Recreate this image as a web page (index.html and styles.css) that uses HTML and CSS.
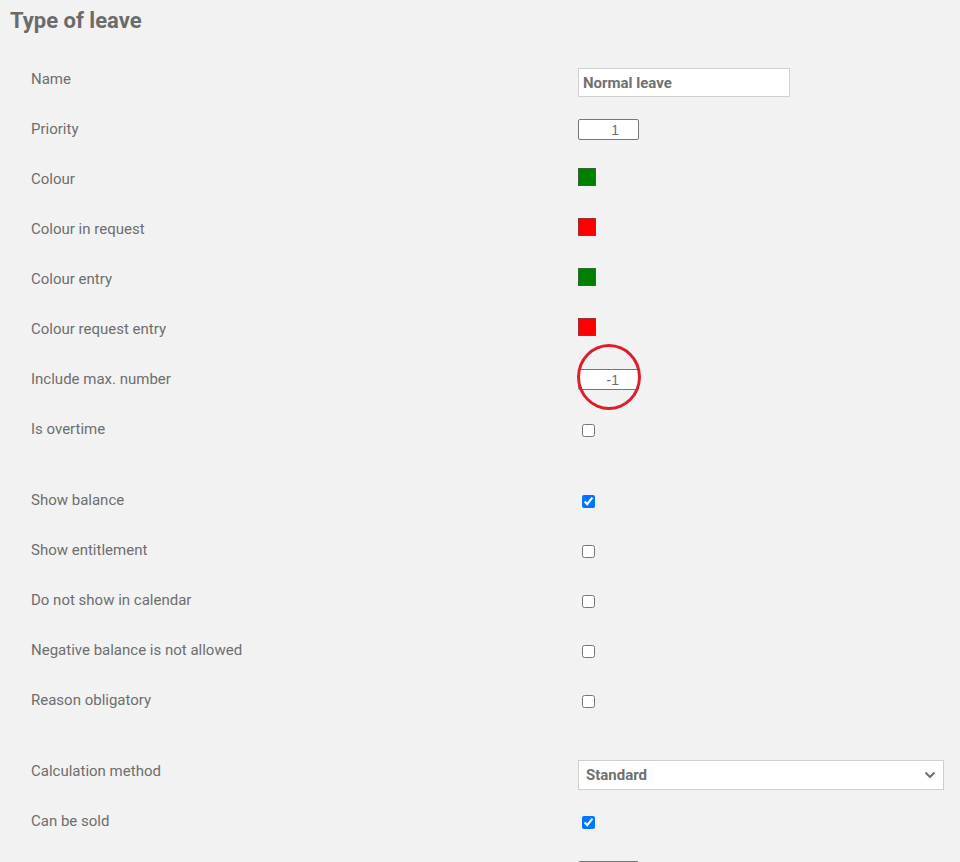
FILE: index.html
```html
<!DOCTYPE html>
<html lang="en">
<head>
<meta charset="utf-8">
<title>Type of leave</title>
<link rel="stylesheet" href="styles.css">
</head>
<body>
<h1 class="page-title">Type of leave</h1>
<div class="form">
  <div class="row"><div class="label">Name</div><div class="control"><input class="text-input" type="text" value="Normal leave"></div></div>
  <div class="row"><div class="label">Priority</div><div class="control"><input class="num-input" type="text" value="1"></div></div>
  <div class="row"><div class="label">Colour</div><div class="control"><span class="swatch green"></span></div></div>
  <div class="row"><div class="label">Colour in request</div><div class="control"><span class="swatch red"></span></div></div>
  <div class="row"><div class="label">Colour entry</div><div class="control"><span class="swatch green"></span></div></div>
  <div class="row"><div class="label">Colour request entry</div><div class="control"><span class="swatch red"></span></div></div>
  <div class="row"><div class="label">Include max. number</div><div class="control"><span class="highlight-wrap"><input class="num-input num-plain" type="text" value="-1"><span class="highlight-ring"></span></span></div></div>
  <div class="row"><div class="label">Is overtime</div><div class="control"><input class="check" type="checkbox"></div></div>
  <div class="spacer"></div>
  <div class="row"><div class="label">Show balance</div><div class="control"><input class="check" type="checkbox" checked></div></div>
  <div class="row"><div class="label">Show entitlement</div><div class="control"><input class="check" type="checkbox"></div></div>
  <div class="row"><div class="label">Do not show in calendar</div><div class="control"><input class="check" type="checkbox"></div></div>
  <div class="row"><div class="label">Negative balance is not allowed</div><div class="control"><input class="check" type="checkbox"></div></div>
  <div class="row"><div class="label">Reason obligatory</div><div class="control"><input class="check" type="checkbox"></div></div>
  <div class="spacer"></div>
  <div class="row"><div class="label">Calculation method</div><div class="control"><span class="select-wrap"><select class="select"><option>Standard</option></select><svg class="chevron" width="12" height="8" viewBox="0 0 12 8"><path d="M1.5 1.5 L6 6 L10.5 1.5" fill="none" stroke="#6f6f6f" stroke-width="2"/></svg></span></div></div>
  <div class="row"><div class="label">Can be sold</div><div class="control"><input class="check" type="checkbox" checked></div></div>
  <div class="row"><div class="label"></div><div class="control"><input class="num-input" type="text" value=""></div></div>
</div>
</body>
</html>
```

FILE: styles.css
```css
html, body {
  margin: 0;
  padding: 0;
  background: #f2f2f2;
  font-family: Roboto, "Liberation Sans", sans-serif;
  color: #6e6e6e;
  overflow: hidden;
}

.page-title {
  margin: 0;
  padding: 7px 0 0 10px;
  height: 54px;
  box-sizing: border-box;
  font-size: 22px;
  font-weight: 700;
  color: #6b6b6b;
  line-height: 28px;
}

.form {
  padding-left: 31px;
}

.row {
  display: grid;
  grid-template-columns: 547px 1fr;
  height: 50px;
  align-items: center;
}

.spacer {
  height: 21px;
}

.label {
  font-size: 15px;
  color: #6e6e6e;
}

.control {
  display: flex;
  align-items: center;
}

.text-input {
  width: 212px;
  height: 29px;
  box-sizing: border-box;
  margin: 7px 0 0 0;
  padding: 0 4px;
  border: 1px solid #cfcfcf;
  background: #fff;
  font-family: inherit;
  font-size: 15px;
  font-weight: 700;
  color: #707070;
  outline: none;
}

.num-input {
  width: 61px;
  height: 21px;
  box-sizing: border-box;
  margin: 1px 0 0 0;
  padding: 0 19px 0 2px;
  border: 1px solid #767676;
  border-radius: 2px;
  background: #fff;
  font-family: "Liberation Sans", Arial, sans-serif;
  font-size: 14px;
  color: #6e6e6e;
  text-align: right;
  outline: none;
}

.highlight-wrap {
  position: relative;
  display: inline-flex;
}

.highlight-ring {
  position: absolute;
  left: -1px;
  top: -24px;
  width: 64px;
  height: 66px;
  box-sizing: border-box;
  border: 3.5px solid #dc1f2c;
  border-radius: 50%;
}

.swatch {
  display: block;
  width: 18px;
  height: 18px;
  box-sizing: border-box;
  margin-top: -4px;
  border: 1px solid rgba(90, 90, 90, 0.55);
}

.swatch.green { background: #008000; }
.swatch.red { background: #ff0000; }

.check {
  margin: 6px 3px 3px 4px;
  width: 13px;
  height: 13px;
}

.select-wrap {
  position: relative;
  display: inline-flex;
  margin-top: 8px;
}

.select {
  appearance: none;
  -webkit-appearance: none;
  width: 366px;
  height: 30px;
  box-sizing: border-box;
  padding: 0 7px;
  border: 1px solid #cfcfcf;
  border-radius: 0;
  background: #fff;
  font-family: inherit;
  font-size: 15px;
  font-weight: 700;
  color: #707070;
  outline: none;
}

.chevron {
  position: absolute;
  right: 8px;
  top: 11px;
  pointer-events: none;
}
```
